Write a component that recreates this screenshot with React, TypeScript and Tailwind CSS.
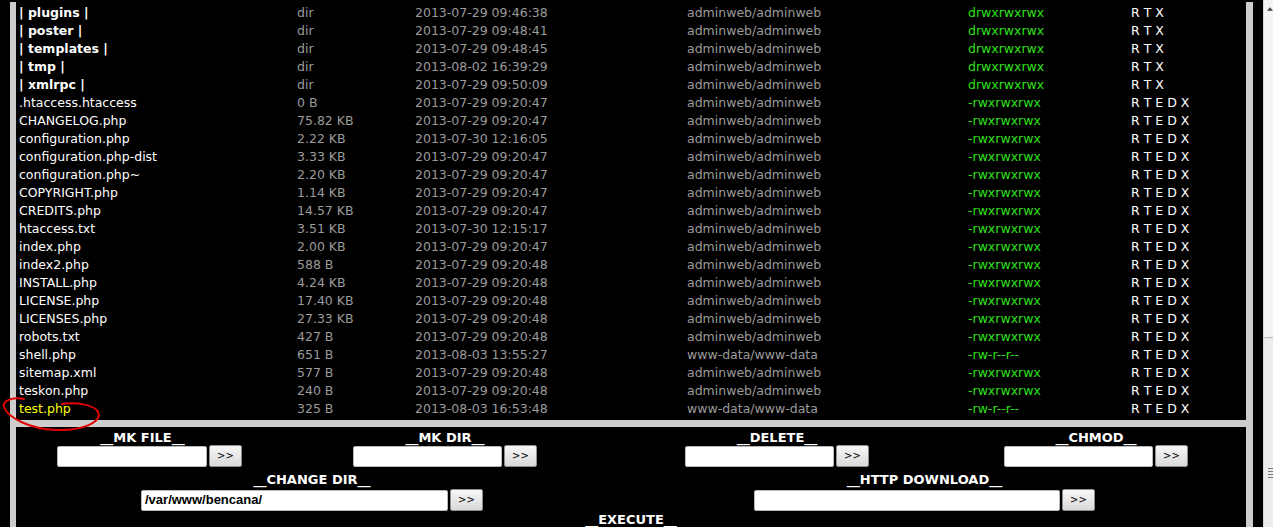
type Row = {
  name: string;
  size: string;
  date: string;
  owner: string;
  perms: string;
  actions: string;
  dir?: boolean;
  hot?: boolean;
};

const rows: Row[] = [
  { name: '| plugins |', size: 'dir', date: '2013-07-29 09:46:38', owner: 'adminweb/adminweb', perms: 'drwxrwxrwx', actions: 'R T X', dir: true },
  { name: '| poster |', size: 'dir', date: '2013-07-29 09:48:41', owner: 'adminweb/adminweb', perms: 'drwxrwxrwx', actions: 'R T X', dir: true },
  { name: '| templates |', size: 'dir', date: '2013-07-29 09:48:45', owner: 'adminweb/adminweb', perms: 'drwxrwxrwx', actions: 'R T X', dir: true },
  { name: '| tmp |', size: 'dir', date: '2013-08-02 16:39:29', owner: 'adminweb/adminweb', perms: 'drwxrwxrwx', actions: 'R T X', dir: true },
  { name: '| xmlrpc |', size: 'dir', date: '2013-07-29 09:50:09', owner: 'adminweb/adminweb', perms: 'drwxrwxrwx', actions: 'R T X', dir: true },
  { name: '.htaccess.htaccess', size: '0 B', date: '2013-07-29 09:20:47', owner: 'adminweb/adminweb', perms: '-rwxrwxrwx', actions: 'R T E D X' },
  { name: 'CHANGELOG.php', size: '75.82 KB', date: '2013-07-29 09:20:47', owner: 'adminweb/adminweb', perms: '-rwxrwxrwx', actions: 'R T E D X' },
  { name: 'configuration.php', size: '2.22 KB', date: '2013-07-30 12:16:05', owner: 'adminweb/adminweb', perms: '-rwxrwxrwx', actions: 'R T E D X' },
  { name: 'configuration.php-dist', size: '3.33 KB', date: '2013-07-29 09:20:47', owner: 'adminweb/adminweb', perms: '-rwxrwxrwx', actions: 'R T E D X' },
  { name: 'configuration.php~', size: '2.20 KB', date: '2013-07-29 09:20:47', owner: 'adminweb/adminweb', perms: '-rwxrwxrwx', actions: 'R T E D X' },
  { name: 'COPYRIGHT.php', size: '1.14 KB', date: '2013-07-29 09:20:47', owner: 'adminweb/adminweb', perms: '-rwxrwxrwx', actions: 'R T E D X' },
  { name: 'CREDITS.php', size: '14.57 KB', date: '2013-07-29 09:20:47', owner: 'adminweb/adminweb', perms: '-rwxrwxrwx', actions: 'R T E D X' },
  { name: 'htaccess.txt', size: '3.51 KB', date: '2013-07-30 12:15:17', owner: 'adminweb/adminweb', perms: '-rwxrwxrwx', actions: 'R T E D X' },
  { name: 'index.php', size: '2.00 KB', date: '2013-07-29 09:20:47', owner: 'adminweb/adminweb', perms: '-rwxrwxrwx', actions: 'R T E D X' },
  { name: 'index2.php', size: '588 B', date: '2013-07-29 09:20:48', owner: 'adminweb/adminweb', perms: '-rwxrwxrwx', actions: 'R T E D X' },
  { name: 'INSTALL.php', size: '4.24 KB', date: '2013-07-29 09:20:48', owner: 'adminweb/adminweb', perms: '-rwxrwxrwx', actions: 'R T E D X' },
  { name: 'LICENSE.php', size: '17.40 KB', date: '2013-07-29 09:20:48', owner: 'adminweb/adminweb', perms: '-rwxrwxrwx', actions: 'R T E D X' },
  { name: 'LICENSES.php', size: '27.33 KB', date: '2013-07-29 09:20:48', owner: 'adminweb/adminweb', perms: '-rwxrwxrwx', actions: 'R T E D X' },
  { name: 'robots.txt', size: '427 B', date: '2013-07-29 09:20:48', owner: 'adminweb/adminweb', perms: '-rwxrwxrwx', actions: 'R T E D X' },
  { name: 'shell.php', size: '651 B', date: '2013-08-03 13:55:27', owner: 'www-data/www-data', perms: '-rw-r--r--', actions: 'R T E D X' },
  { name: 'sitemap.xml', size: '577 B', date: '2013-07-29 09:20:48', owner: 'adminweb/adminweb', perms: '-rwxrwxrwx', actions: 'R T E D X' },
  { name: 'teskon.php', size: '240 B', date: '2013-07-29 09:20:48', owner: 'adminweb/adminweb', perms: '-rwxrwxrwx', actions: 'R T E D X' },
  { name: 'test.php', size: '325 B', date: '2013-08-03 16:53:48', owner: 'www-data/www-data', perms: '-rw-r--r--', actions: 'R T E D X', hot: true },
];

function Label({ text, shift = '' }: { text: string; shift?: string }) {
  return (
    <div className={`text-center text-[13px] leading-[14px] font-bold text-white font-['DejaVu_Sans',sans-serif] whitespace-pre ${shift}`}>
      {text}
    </div>
  );
}

function Field({ width, value }: { width: string; value?: string }) {
  return (
    <div className="flex items-center gap-[2px]">
      <div
        className={`${width} h-[21px] bg-white border border-[#b9b9b9] rounded-[2px] px-[3px] flex items-center text-[13px] font-bold text-black font-['Liberation_Sans',sans-serif]`}
      >
        {value}
      </div>
      <button className="w-[33px] h-[22px] bg-gradient-to-b from-[#f7f7f7] to-[#d9d9d9] border border-[#8f8f8f] rounded-[2px] text-[10px] text-black font-['DejaVu_Sans',sans-serif] leading-none">
        &gt;&gt;
      </button>
    </div>
  );
}

export default function App() {
  return (
    <div className="relative w-[1273px] h-[527px] bg-black overflow-hidden flex font-['DejaVu_Sans',sans-serif]">
      <div className="w-[1263px] pt-[2px] flex flex-col">
        <div className="ml-[10px] h-px bg-[#8a8a8a]" />
        <div className="ml-[10px] w-[1243px] flex-1 flex flex-col border-l-[6px] border-r-[7px] border-[#cecece]">
          {/* file listing */}
          <div className="pl-[3px] pt-[2px] pb-[2px]">
            {rows.map((r) => (
              <div
                key={r.name}
                className="grid grid-cols-[278px_118px_272px_281px_163px_1fr] h-[18px] items-center text-[12.5px] leading-[18px] whitespace-nowrap"
              >
                <span className={r.hot ? 'text-[#ffff00]' : r.dir ? 'text-white font-bold' : 'text-white'}>{r.name}</span>
                <span className="text-[#9b9b9b]">{r.size}</span>
                <span className="text-[#9b9b9b]">{r.date}</span>
                <span className="text-[#9b9b9b]">{r.owner}</span>
                <span className="text-[#2fe01a]">{r.perms}</span>
                <span className="text-white">{r.actions}</span>
              </div>
            ))}
          </div>
          <div className="h-[7px] bg-[#cecece]" />

          {/* tool forms */}
          <div className="flex-1 flex flex-col">
            <div className="flex pt-[4px] pl-[41px]">
              <div className="flex flex-col">
                <Label text="__MK FILE__" shift="-translate-x-[7px]" />
                <Field width="w-[150px]" />
              </div>
              <div className="flex flex-col ml-[111px]">
                <Label text="__MK DIR__" />
                <Field width="w-[149px]" />
              </div>
              <div className="flex flex-col ml-[148px]">
                <Label text="__DELETE__" />
                <Field width="w-[149px]" />
              </div>
              <div className="flex flex-col ml-[135px]">
                <Label text="__CHMOD__" />
                <Field width="w-[149px]" />
              </div>
            </div>
            <div className="flex mt-[6px] pl-[125px]">
              <div className="flex flex-col gap-[2px]">
                <Label text="__CHANGE DIR__" />
                <Field width="w-[307px]" value="/var/www/bencana/" />
              </div>
              <div className="flex flex-col gap-[2px] ml-[271px]">
                <Label text="__HTTP DOWNLOAD__" />
                <Field width="w-[306px]" />
              </div>
            </div>
            <div className="mt-[2px]">
              <Label text="__EXECUTE__" />
            </div>
          </div>
        </div>
      </div>

      {/* scrollbar */}
      <div className="w-[10px] h-full bg-[#f3f3f3] border-l border-[#d6d6d6] flex flex-col">
        <div className="h-[17px] flex items-center justify-center pl-[3px]">
          <svg width="7" height="4" viewBox="0 0 7 4">
            <path d="M0 4 L3.5 0 L7 4 Z" fill="#404040" />
          </svg>
        </div>
        <div className="h-[320px]" />
        <div className="flex-1 bg-[#ececec] border-t border-[#b8b8b8] rounded-tl-[2px] flex flex-col items-end pt-[130px] gap-[2px]">
          <div className="w-[5px] h-px bg-[#7a7a7a]" />
          <div className="w-[5px] h-px bg-[#7a7a7a]" />
          <div className="w-[5px] h-px bg-[#7a7a7a]" />
          <div className="w-[5px] h-px bg-[#7a7a7a]" />
        </div>
      </div>

      {/* red hand-drawn marker round test.php */}
      <svg className="absolute left-0 top-0 pointer-events-none" width="1273" height="527">
        <path
          d="M24 399 C14 397, 2 400, 4 407 C8 418, 30 429, 56 430 C82 431, 103 422, 98 412 C95 405, 77 402, 62 404"
          fill="none"
          stroke="#e30000"
          strokeWidth="2"
          strokeLinecap="round"
        />
      </svg>
    </div>
  );
}
